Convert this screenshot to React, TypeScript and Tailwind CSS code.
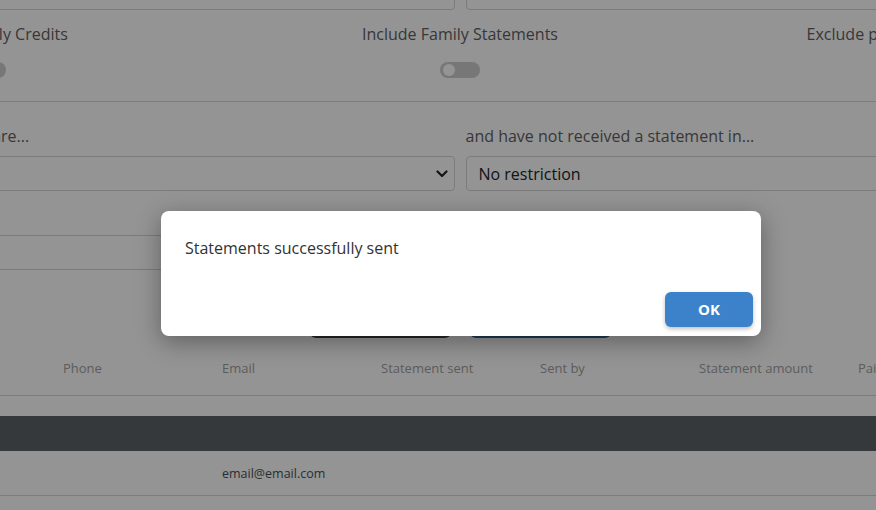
const toggles = ['Include Family Credits', 'Include Family Statements', 'Exclude previously sent statement'];
const columns = ['Name', 'Family', 'Phone', 'Email', 'Statement sent', 'Sent by', 'Statement amount', 'Paid', ''];

function Toggle() {
  return (
    <span className="relative mt-4 inline-block h-4 w-10 rounded-full bg-[#cdcdcd]">
      <span className="absolute left-[3px] top-[2px] h-3 w-3 rounded-full bg-white" />
    </span>
  );
}

export default function App() {
  return (
    <div
      className="relative h-[510px] w-[876px] overflow-hidden bg-white text-[#5f5f5f]"
      style={{ fontFamily: '"Open Sans", "Noto Sans", sans-serif' }}
    >
      <div className="-ml-[251px] -mt-[25px] w-[1422px]">
        {/* top inputs */}
        <div className="grid grid-cols-2 gap-[11px]">
          <div className="h-[35px] rounded border border-[#d5d5d5]" />
          <div className="h-[35px] rounded border border-[#d5d5d5]" />
        </div>

        {/* toggles */}
        <div className="grid grid-cols-3 border-b border-[#d7d7d7] pb-[23px] pt-3">
          {toggles.map((t) => (
            <div key={t} className="flex flex-col items-center">
              <span className="text-base leading-6">{t}</span>
              <Toggle />
            </div>
          ))}
        </div>

        {/* filters */}
        <div className="grid grid-cols-2 gap-[11px] pt-[22px]">
          <div>
            <div className="mb-2 text-base leading-6">Include families whose balances are...</div>
            <div className="flex h-[35px] items-center justify-end rounded border border-[#d5d5d5] pr-[6px] text-[#212529]">
              <svg width="12" height="8" viewBox="0 0 12 8" fill="none">
                <path d="M1.5 1.5 6 6 10.5 1.5" stroke="#212529" strokeWidth="2.2" strokeLinecap="round" strokeLinejoin="round" />
              </svg>
            </div>
          </div>
          <div>
            <div className="mb-2 text-base leading-6">and have not received a statement in...</div>
            <div className="flex h-[35px] items-center rounded border border-[#d5d5d5] px-3 text-base text-[#212529]">
              No restriction
            </div>
          </div>
        </div>

        <div className="grid grid-cols-2 gap-[11px] pt-[44px]">
          <div className="h-[35px] rounded border border-[#d5d5d5]" />
          <div />
        </div>

        {/* actions */}
        <div className="flex justify-center gap-[19px] pt-[30px]">
          <button className="h-[38px] w-[141px] rounded-md bg-[#424242] text-sm text-white">Preview</button>
          <button className="h-[38px] w-[141px] rounded-md bg-[#346493] text-sm text-white">Send statements</button>
        </div>

        {/* table */}
        <div className="mt-[18px] grid grid-cols-[155px_repeat(8,159px)] border-b border-[#d7d7d7] pb-[15px] text-[13px] leading-6 text-[#9f9f9f]">
          {columns.map((c, i) => (
            <div key={i}>{c}</div>
          ))}
        </div>
        <div className="mt-5 h-[35px] bg-[#5d6267]" />
        <div className="grid h-[45px] grid-cols-[155px_repeat(8,159px)] items-center border-b border-[#d7d7d7] pt-[3px] text-[12.5px] text-[#495057]">
          <div />
          <div />
          <div />
          <div>email@email.com</div>
        </div>
      </div>

      {/* dialog */}
      <div className="absolute inset-0 bg-black/[0.42]">
        <div className="ml-[161px] mt-[211px] flex h-[125px] w-[600px] flex-col justify-between rounded-lg bg-white pb-[9px] pl-6 pr-2 pt-[25px] shadow-[0_6px_24px_rgba(0,0,0,0.35)]">
          <p className="text-base leading-6 text-[#333]">Statements successfully sent</p>
          <div className="flex justify-end">
            <button className="h-[35px] w-[88px] rounded-md bg-[#3c82cb] text-[15px] font-bold text-white shadow-[0_2px_4px_rgba(0,0,0,0.25)]">
              OK
            </button>
          </div>
        </div>
      </div>
    </div>
  );
}
